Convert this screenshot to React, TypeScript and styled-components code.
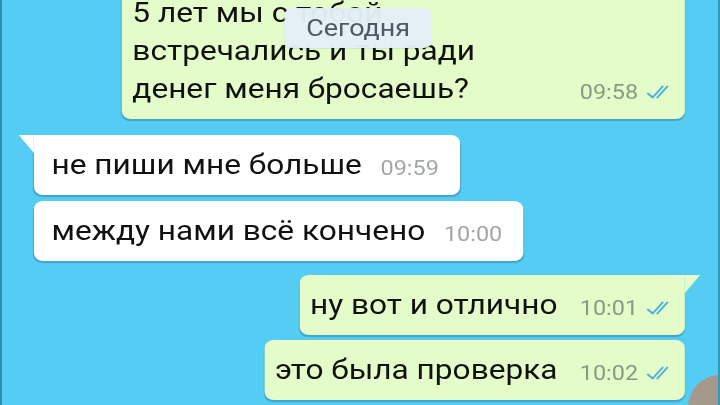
import React from 'react';
import styled, { createGlobalStyle } from 'styled-components';

interface IBubbleProps {
  $out?: boolean;
  $tail?: boolean;
}

interface IRowProps {
  $out?: boolean;
  $gap?: number;
}

// the capture is stretched sideways, so the phone is laid out narrow and scaled
const STRETCH = 1.1707;

const GlobalStyle = createGlobalStyle`
  html, body {
    margin: 0;
    padding: 0;
    background: #55ccf4;
  }
  body {
    font-family: Roboto, 'Noto Sans', sans-serif;
  }
`;

const Screen = styled.div`
  position: relative;
  width: 720px;
  height: 405px;
  overflow: hidden;
  box-sizing: border-box;
  background: #55ccf4;
  border-left: 2px solid #2e8fa9;
  border-right: 2px solid #3a98b0;
`;

const Phone = styled.div`
  position: relative;
  display: flex;
  flex-direction: column;
  width: ${720 / STRETCH}px;
  height: 405px;
  margin-left: -2px;
  transform: scaleX(${STRETCH});
  transform-origin: 0 0;
`;

const Feed = styled.div`
  display: flex;
  flex-direction: column;
  margin-top: -17px;
`;

const Row = styled.div<IRowProps>`
  display: flex;
  justify-content: ${({ $out }) => ($out ? 'flex-end' : 'flex-start')};
  padding: ${({ $out }) => ($out ? '0 30px 0 0' : '0 0 0 29px')};
  margin-top: ${({ $gap }) => $gap ?? 0}px;
`;

const Bubble = styled.div<IBubbleProps>`
  position: relative;
  display: flex;
  align-items: flex-end;
  box-sizing: border-box;
  padding: ${({ $out }) => ($out ? '11px 10px 11px 9px' : '11px 18px 11px 15px')};
  background: ${({ $out }) => ($out ? '#e4fcc9' : '#ffffff')};
  border-radius: ${({ $tail, $out }) =>
    $tail ? ($out ? '8px 0 8px 8px' : '0 8px 8px 8px') : '8px'};
  box-shadow: 0 2px 1px rgba(40, 90, 110, 0.35);

  &::before {
    content: '';
    display: ${({ $tail }) => ($tail ? 'block' : 'none')};
    position: absolute;
    top: 0;
    ${({ $out }) => ($out ? 'right: -13px;' : 'left: -13px;')}
    width: 13px;
    height: 18px;
    background: ${({ $out }) => ($out ? '#e4fcc9' : '#ffffff')};
    clip-path: ${({ $out }) =>
      $out ? 'polygon(0 0, 100% 0, 0 100%)' : 'polygon(0 0, 100% 0, 100% 100%)'};
  }
`;

const Wide = styled(Bubble)`
  width: 481px;
`;

const Text = styled.div`
  flex: 1;
  font-size: 27px;
  line-height: 38px;
  color: #111;
  white-space: nowrap;
`;

const Meta = styled.div<{ $in?: boolean }>`
  display: flex;
  align-items: center;
  gap: 7px;
  margin-left: ${({ $in }) => ($in ? '16px' : '19px')};
  margin-bottom: 4px;
`;

const Time = styled.span<{ $in?: boolean }>`
  font-size: 20px;
  line-height: 24px;
  color: ${({ $in }) => ($in ? '#a3a6a6' : '#8a9a82')};
`;

const DatePill = styled.div`
  position: absolute;
  top: 8px;
  left: 243px;
  width: 126px;
  height: 40px;
  border-radius: 7px;
  background: rgba(226, 241, 247, 0.97);
  color: #4d5a63;
  font-size: 23px;
  display: flex;
  align-items: center;
  justify-content: center;
  box-shadow: 0 1px 1px rgba(0, 0, 0, 0.08);
`;

const Fab = styled.div`
  position: absolute;
  right: -27px;
  bottom: -34px;
  width: 54px;
  height: 64px;
  border-radius: 50%;
  background: radial-gradient(circle at 30% 80%, #c9504a 0 8px, #a4998c 9px);
`;

const Ticks = () => (
  <svg width="23" height="16" viewBox="0 0 23 16" fill="none">
    <path
      d="M1.5 9.5 L5.5 13.5 L14 2.5 M9.5 13.5 L18 2.5"
      stroke="#4fb3dc"
      strokeWidth="1.8"
      strokeLinecap="round"
      strokeLinejoin="round"
    />
  </svg>
);

const App = () => {
  return (
    <Screen>
      <GlobalStyle />
      <Phone>
        <Feed>
          <Row $out>
            <Wide $out>
              <Text>
                5 лет мы с тобой
                <br />
                встречались и ты ради
                <br />
                денег меня бросаешь?
              </Text>
              <Meta>
                <Time>09:58</Time>
                <Ticks />
              </Meta>
            </Wide>
          </Row>
          <Row $gap={16}>
            <Bubble $tail>
              <Text>не пиши мне больше</Text>
              <Meta $in>
                <Time $in>09:59</Time>
              </Meta>
            </Bubble>
          </Row>
          <Row $gap={6}>
            <Bubble>
              <Text>между нами всё кончено</Text>
              <Meta $in>
                <Time $in>10:00</Time>
              </Meta>
            </Bubble>
          </Row>
          <Row $out $gap={14}>
            <Bubble $out $tail>
              <Text>ну вот и отлично</Text>
              <Meta>
                <Time>10:01</Time>
                <Ticks />
              </Meta>
            </Bubble>
          </Row>
          <Row $out $gap={5}>
            <Bubble $out>
              <Text>это была проверка</Text>
              <Meta>
                <Time>10:02</Time>
                <Ticks />
              </Meta>
            </Bubble>
          </Row>
        </Feed>
        <DatePill>Сегодня</DatePill>
        <Fab />
      </Phone>
    </Screen>
  );
};

export default App;
